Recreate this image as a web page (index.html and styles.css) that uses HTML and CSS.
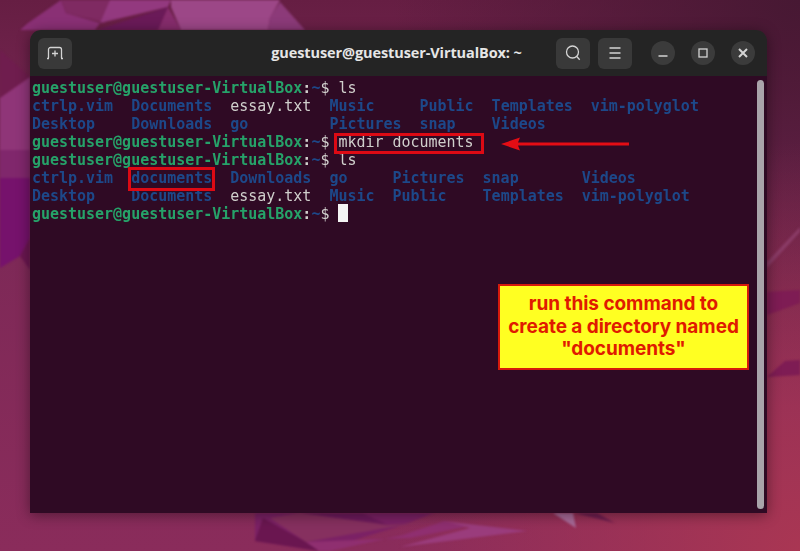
FILE: index.html
```html
<!DOCTYPE html>
<html lang="en">
<head>
<meta charset="utf-8">
<title>guestuser@guestuser-VirtualBox: ~</title>
<link rel="stylesheet" href="styles.css">
</head>
<body>
<div class="desktop">
  <svg class="wallpaper" viewBox="0 0 800 551" aria-hidden="true">
    <g class="facets">
      <polygon fill="#8a3075" points="28,23 61,0 66,13 100,23 95,30 20,30"/>
      <polygon fill="#7f2a62" points="61,0 110,0 105,23 66,13"/>
      <polygon fill="#93397f" points="110,0 171,0 168,7 100,23"/>
      <polygon fill="#6a1a58" points="97,30 168,7 158,30"/>
      <polygon fill="#9c4787" points="171,0 280,0 270,18 268,30 181,30 171,7"/>
      <polygon fill="#8c3a79" points="280,2 305,30 268,30 270,17"/>
      <polygon fill="#862c6c" points="168,7 181,30 158,30"/>
      <polygon fill="#6f1d4e" points="0,50 30,77 0,98"/>
      <polygon fill="#8f3578" points="0,98 30,77 30,150 0,150"/>
      <polygon fill="#80276c" points="0,150 30,150 30,178 0,178"/>
      <polygon fill="#76126c" points="0,178 30,178 30,238 20,256 0,268"/>
      <polygon fill="#6a1650" points="30,238 30,270 20,256"/>
      <polygon fill="#7b2165" points="255,513 434,513 403,525 319,551 255,541"/>
      <polygon fill="#6a1650" points="263,518 255,541 319,551 306,542"/>
      <polygon fill="#6d1a5c" points="298,513 388,525 362,513"/>
      <polygon fill="#86305f" points="270,518 306,542 403,525 444,521 388,525 300,513"/>
      <polygon fill="#8f2f70" points="306,542 410,538 470,526 444,521 403,535 330,551 319,551"/>
      <polygon fill="#9a3c7c" points="444,521 527,531 400,547 470,528"/>
      <polygon fill="#a86a98" points="553,513 573,513 576,528"/>
      <polygon fill="#6e1e4f" points="574,513 597,513 615,523"/>
      <polygon fill="#8a3b66" points="767,262 800,227 800,232 767,268"/>
      <polygon fill="#7e1c54" points="767,292 800,290 800,303 767,315"/>
      <polygon fill="#7e1c54" points="767,377 785,361 800,360 800,375"/>
    </g>
  </svg>

  <main class="window">
    <header class="titlebar">
      <div class="bar-left">
        <button class="tool" aria-label="New tab">
          <svg viewBox="0 0 18 16" class="icon"><path d="M2.500 13V4.500a2 2 0 0 1 2-2h9a2 2 0 0 1 2 2V13M1 13.500h2M15 13.500h2M9 5.500v6M6 8.500h6"/></svg>
        </button>
      </div>
      <h1 class="title">guestuser@guestuser-VirtualBox: ~</h1>
      <div class="bar-right">
        <button class="tool" aria-label="Search">
          <svg viewBox="0 0 18 18" class="icon"><circle cx="8.500" cy="8" r="6"/><path d="M12.800 12.500l2.900 3.200"/></svg>
        </button>
        <button class="tool" aria-label="Menu">
          <svg viewBox="0 0 18 18" class="icon"><path d="M3.500 4h11M3.500 9h11M3.500 14h11"/></svg>
        </button>
        <div class="controls">
          <button class="round" aria-label="Minimize"><svg viewBox="0 0 16 16" class="icon"><path d="M3.500 11h9"/></svg></button>
          <button class="round" aria-label="Maximize"><svg viewBox="0 0 16 16" class="icon"><rect x="4" y="4" width="8" height="8"/></svg></button>
          <button class="round" aria-label="Close"><svg viewBox="0 0 16 16" class="icon icon-bold"><path d="M4 4l8 8M12 4l-8 8"/></svg></button>
        </div>
      </div>
    </header>

    <section class="terminal">
      <div class="output">
        <div class="line"><span class="user">guestuser@guestuser-VirtualBox</span><span class="sep">:</span><span class="path">~</span><span class="cmd">$ ls</span></div>
        <div class="line"><span class="dir">ctrlp.vim  Documents  </span><span class="file">essay.txt</span><span class="dir">  Music     Public  Templates  vim-polyglot</span></div>
        <div class="line"><span class="dir">Desktop    Downloads  go         Pictures  snap    Videos</span></div>
        <div class="line"><span class="user">guestuser@guestuser-VirtualBox</span><span class="sep">:</span><span class="path">~</span><span class="cmd">$ mkdir documents</span></div>
        <div class="line"><span class="user">guestuser@guestuser-VirtualBox</span><span class="sep">:</span><span class="path">~</span><span class="cmd">$ ls</span></div>
        <div class="line"><span class="dir">ctrlp.vim  documents  Downloads  go     Pictures  snap       Videos</span></div>
        <div class="line"><span class="dir">Desktop    Documents  </span><span class="file">essay.txt</span><span class="dir">  Music  Public    Templates  vim-polyglot</span></div>
        <div class="line"><span class="user">guestuser@guestuser-VirtualBox</span><span class="sep">:</span><span class="path">~</span><span class="cmd">$ </span><span class="cursor"> </span></div>
      </div>
      <div class="scrollbar"></div>
    </section>
  </main>

  <div class="mark mark-mkdir"></div>
  <div class="mark mark-documents"></div>
  <svg class="arrow" viewBox="0 0 130 14" aria-hidden="true">
    <polygon points="0,7 19,0.500 17,5.500 128,5.500 128,8.500 17,8.500 19,13.500"/>
  </svg>
  <div class="note">run this command to<br>create a directory named<br>"documents"</div>
</div>
</body>
</html>
```

FILE: styles.css
```css
* { box-sizing: border-box; }

html, body {
  margin: 0;
  padding: 0;
  width: 800px;
  height: 551px;
  overflow: hidden;
}

.desktop {
  position: relative;
  width: 800px;
  height: 551px;
  padding: 30px 33px 38px 30px;
  display: flex;
  background:
    radial-gradient(circle at 100% 100%, #a93653 0, rgba(169, 54, 83, 0) 42%),
    radial-gradient(circle at 100% 0, #471833 0, rgba(71, 24, 51, 0) 42%),
    linear-gradient(180deg, #661e43 0, #7a2856 30%, #8a2c5b 100%);
}

.wallpaper {
  position: absolute;
  inset: 0;
  width: 800px;
  height: 551px;
}

.facets { filter: blur(0.8px); }

.window {
  position: relative;
  flex: 1;
  display: flex;
  flex-direction: column;
  border-radius: 11px 11px 0 0;
  overflow: hidden;
  box-shadow: 0 2px 14px rgba(0, 0, 0, 0.42);
}

.titlebar {
  height: 46px;
  flex: none;
  display: grid;
  grid-template-columns: 1fr auto 1fr;
  align-items: center;
  padding: 0 12px 0 8px;
  background: #242424;
  color: #e4e4e4;
}

.bar-left, .bar-right { display: flex; align-items: center; }
.bar-right { justify-content: flex-end; gap: 8px; }

.title {
  margin: 0;
  font: 700 14.5px/1 "Open Sans", sans-serif;
  letter-spacing: -0.1px;
  color: #e6e6e6;
  white-space: nowrap;
}

.tool, .round {
  padding: 0;
  border: 0;
  color: #d4d4d4;
  display: flex;
  align-items: center;
  justify-content: center;
}

.tool {
  width: 34px;
  height: 31px;
  border-radius: 6px;
  background: #393939;
}

.round {
  width: 24px;
  height: 24px;
  border-radius: 50%;
  background: #3b3b3b;
}

.controls {
  display: flex;
  gap: 16px;
  margin-left: 11px;
}

.icon {
  width: 18px;
  height: 18px;
  fill: none;
  stroke: currentColor;
  stroke-width: 1.3;
}

.round .icon { width: 16px; height: 16px; }
.icon-bold { stroke-width: 2; }

.terminal {
  flex: 1;
  display: flex;
  background: #2f0a24;
}

.output {
  flex: 1;
  padding: 3px 0 0 2px;
  font: 700 14.970px/18px "DejaVu Sans Mono", monospace;
  filter: blur(0.4px);
}

.line {
  height: 18px;
  white-space: pre;
}

.user { color: #26a269; }
.sep { color: #d0cfcc; }
.path { color: #1d4889; }
.cmd { color: #d0cfcc; font-weight: 400; }
.dir { color: #1d4889; }
.file { color: #d0cfcc; font-weight: 400; }

.cursor {
  display: inline-block;
  width: 9.500px;
  height: 18px;
  margin-top: -1px;
  background: #f4f4f4;
  vertical-align: top;
}

.scrollbar {
  flex: none;
  width: 7px;
  margin: 4px 3px 4px 0;
  border-radius: 4px;
  background: #a9a4aa;
}

.mark {
  position: absolute;
  border: 3px solid #dd0a14;
}

.mark-mkdir { left: 334px; top: 133px; width: 150px; height: 21px; }
.mark-documents { left: 128px; top: 167px; width: 87px; height: 24px; }

.arrow {
  position: absolute;
  left: 501px;
  top: 137px;
  width: 130px;
  height: 14px;
  fill: #e40d14;
}

.note {
  position: absolute;
  left: 498px;
  top: 284px;
  width: 251px;
  height: 86px;
  display: flex;
  flex-direction: column;
  align-items: center;
  justify-content: center;
  text-align: center;
  border: 2px solid #d61a0c;
  background: #ffff22;
  color: #e01a00;
  font: 700 19px/22.500px "Inter", sans-serif;
  letter-spacing: -0.05px;
}
```
